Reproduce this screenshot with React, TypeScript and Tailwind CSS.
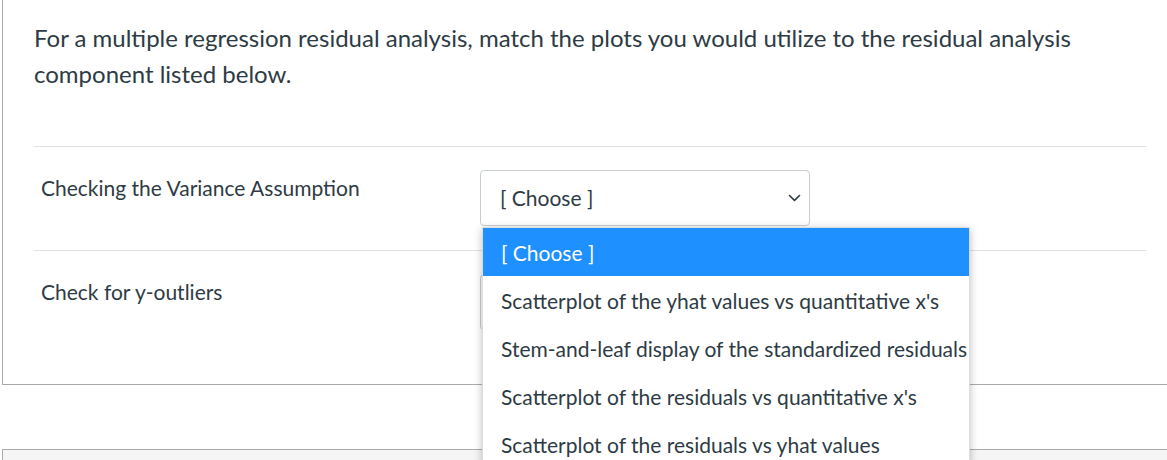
import React from 'react';

const options = [
  '[ Choose ]',
  "Scatterplot of the yhat values vs quantitative x's",
  'Stem-and-leaf display of the standardized residuals',
  "Scatterplot of the residuals vs quantitative x's",
  'Scatterplot of the residuals vs yhat values',
];

const Chevron: React.FC = () => (
  <svg width="13" height="8" viewBox="0 0 13 8" fill="none" className="text-[#2d3b45]">
    <path d="M1.5 1.5 L6.5 6.3 L11.5 1.5" stroke="currentColor" strokeWidth="1.6" strokeLinecap="round" strokeLinejoin="round" />
  </svg>
);

const SelectBox: React.FC<{ open?: boolean }> = ({ open }) => (
  <div className="relative">
    <div className="w-[330px] h-[56px] border border-[#c7cdd1] rounded-[4px] bg-white flex items-center justify-between pl-[19px] pr-[8px]">
      <span className="text-[21px] text-[#2d3b45]">{open ? '[ Choose ]' : ''}</span>
      <Chevron />
    </div>
    {open && (
      <div className="absolute z-10 left-[2px] top-[57px] w-[488px] bg-white border border-[#ddd] shadow-[0_2px_8px_rgba(0,0,0,0.25)]">
        {options.map((o, i) => (
          <div
            key={o}
            className={
              'h-[48px] flex items-center pl-[18px] pt-[2px] text-[21px] whitespace-nowrap ' +
              (i === 0 ? 'bg-[#1e90ff] text-white' : 'text-[#2d3b45]')
            }
          >
            {o}
          </div>
        ))}
      </div>
    )}
  </div>
);

const App: React.FC = () => {
  return (
    <div className="relative w-[1167px] h-[460px] overflow-hidden bg-white font-['Lato',sans-serif] text-[#2d3b45]">
      {/* Question card */}
      <div className="ml-[2px] w-[1300px] h-[385px] border-l border-b border-[#aaaaaa]">
        <div className="pl-[31px] pt-[20px] w-[1144px]">
          <p className="text-[24px] leading-[36px]">
            For a multiple regression residual analysis, match the plots you would utilize to the residual analysis
            component listed below.
          </p>
          <div className="mt-[54px] border-t border-[#e2e2e2]">
            <div className="flex h-[104px] pl-[7px] border-b border-[#e2e2e2]">
              <div className="w-[439px] pt-[28px] text-[21px] leading-[26px]">Checking the Variance Assumption</div>
              <div className="pt-[23px]">
                <SelectBox open />
              </div>
            </div>
            <div className="flex h-[104px] pl-[7px]">
              <div className="w-[439px] pt-[28px] text-[21px] leading-[26px]">Check for y-outliers</div>
              <div className="pt-[23px]">
                <SelectBox />
              </div>
            </div>
          </div>
        </div>
      </div>
      {/* Next question card */}
      <div className="ml-[2px] mt-[64px] w-[1300px] h-[40px] border-l border-t border-[#aaaaaa] bg-[#f5f5f5]" />
    </div>
  );
};

export default App;
